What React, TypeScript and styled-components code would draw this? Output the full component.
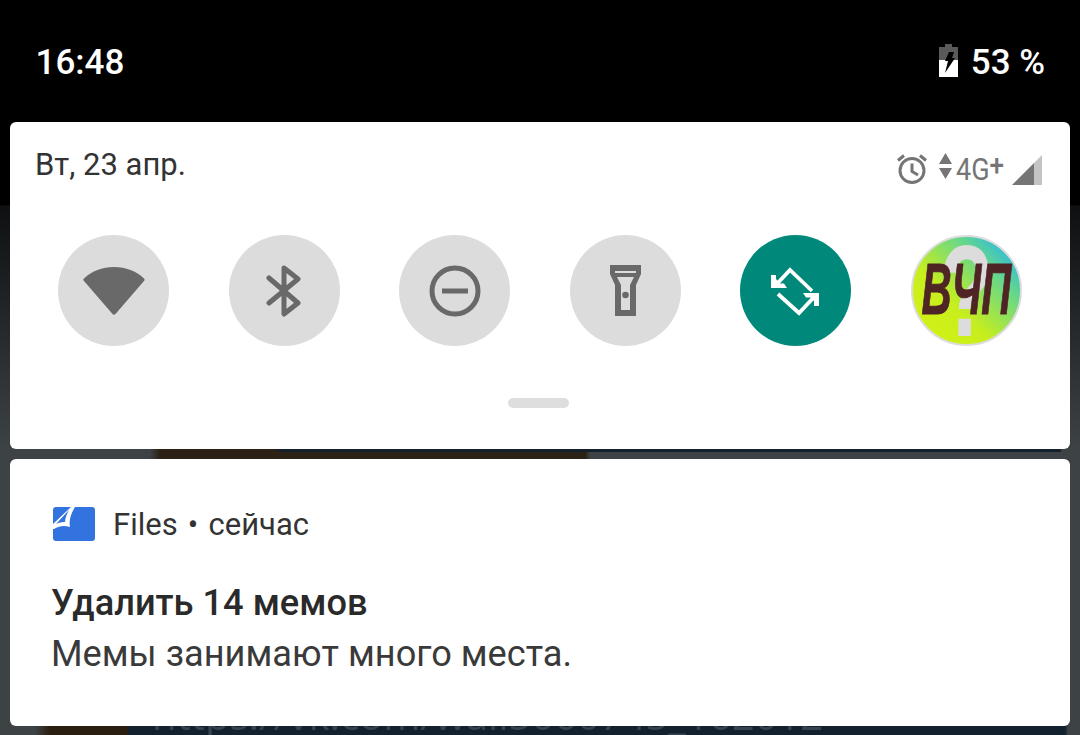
import React from 'react';
import styled, { createGlobalStyle } from 'styled-components';

const GlobalStyle = createGlobalStyle`
  html, body {
    margin: 0;
    padding: 0;
    background: #000;
  }
`;

const Screen = styled.div`
  width: 1080px;
  height: 735px;
  overflow: hidden;
  display: flex;
  flex-direction: column;
  font-family: Roboto, 'Liberation Sans', sans-serif;
  background: linear-gradient(to bottom, #000 0, #000 205px, #0e1011 206px, #3d4245 450px, #3d4245 100%);
`;

const StatusBar = styled.div`
  height: 122px;
  flex: none;
  box-sizing: border-box;
  padding: 2px 35px 0 35.5px;
  display: flex;
  align-items: center;
  justify-content: space-between;
  color: #fff;
  font-size: 35px;
  font-weight: 500;
`;

const Battery = styled.div`
  display: flex;
  align-items: center;
  gap: 13px;

  svg {
    margin-top: -3px;
  }
`;

const Card = styled.section`
  flex: none;
  margin: 0 10px;
  background: #fff;
  border-radius: 6px;
`;

const QuickPanel = styled(Card)`
  height: 327px;
  box-sizing: border-box;
  padding: 28px 28px 0 25px;
  display: flex;
  flex-direction: column;
`;

const PanelHeader = styled.div`
  height: 40px;
  display: flex;
  align-items: flex-start;
  justify-content: space-between;
`;

const DateText = styled.span`
  font-size: 31px;
  line-height: 30px;
  color: #333;
`;

const StatusIcons = styled.div`
  display: flex;
  align-items: center;
  color: #757575;
  margin-top: 2px;
`;

const NetworkLabel = styled.span`
  font-size: 31px;
  line-height: 34px;
  color: #757575;
  transform: scaleX(0.87);
  transform-origin: left center;
  width: 47px;
  margin: 1px 9px 0 0;
  white-space: nowrap;
`;

const Plus = styled.sup`
  font-size: 30px;
  line-height: 0;
  font-weight: 500;
  vertical-align: 5px;
`;

const Tiles = styled.div`
  margin: 45px 0 0 23px;
  display: flex;
  gap: 59.500px;
`;

const Tile = styled.div<{ $active?: boolean }>`
  width: 111px;
  height: 111px;
  flex: none;
  border-radius: 50%;
  display: flex;
  align-items: center;
  justify-content: center;
  background: ${p => (p.$active ? '#00897b' : '#dcdcdc')};
  color: ${p => (p.$active ? '#fff' : '#696969')};
`;

const BadgeTile = styled(Tile)`
  position: relative;
  overflow: hidden;
  box-sizing: border-box;
  border: 2px solid #dcdcdc;
  background: linear-gradient(45deg, #d8f310 0%, #c6ee1e 38%, #63d68e 72%, #27b5e8 92%);
`;

const BadgeMark = styled.span`
  position: absolute;
  inset: 1px 0 0;
  display: flex;
  align-items: center;
  justify-content: center;
  font-family: 'Liberation Sans', sans-serif;
  font-size: 130px;
  line-height: 1;
  font-weight: 700;
  color: #dcdcdc;
  transform: scaleX(0.68);
`;

const BadgeText = styled.span`
  position: relative;
  font-family: 'Liberation Sans', sans-serif;
  font-size: 72px;
  line-height: 72px;
  font-weight: 700;
  font-style: italic;
  color: #4f2424;
  -webkit-text-stroke: 1px #4f2424;
  transform: scaleX(0.58);
  margin-top: -3px;
  white-space: nowrap;
`;

const Handle = styled.div`
  width: 61px;
  height: 10px;
  margin: 52px auto 0;
  border-radius: 5px;
  background: #dedede;
`;

const Gap = styled.div`
  height: 10px;
  flex: none;
  background:
    linear-gradient(to right, transparent 0, transparent 275px, #14202b 280px, #14202b 1060px, transparent 1062px) top / 100% 3px no-repeat,
    linear-gradient(to right, transparent 0, transparent 150px, #2b2114 160px, #2b2114 585px, transparent 590px);
`;

const Notification = styled(Card)`
  height: 267px;
  box-sizing: border-box;
  padding: 46px 42px 0 41px;
  display: flex;
  flex-direction: column;
`;

const AppRow = styled.div`
  display: flex;
  align-items: center;
  gap: 18px;
  height: 38px;
  padding-left: 2px;
  font-size: 31px;
  color: #333;
`;

const Dot = styled.span`
  margin: 0 2.500px;
`;

const Title = styled.div`
  margin-top: 40px;
  font-size: 36.200px;
  line-height: 40px;
  font-weight: 500;
  color: #2a2a2a;
`;

const Body = styled.div`
  margin-top: 11px;
  font-size: 36.200px;
  line-height: 40px;
  color: #3a3a3a;
`;

const BottomPeek = styled.div`
  flex: 1;
  overflow: hidden;
  display: flex;
  background: linear-gradient(to right, transparent 0, transparent 35px, #2a1e10 50px, #2a1e10 127px, #13202d 129px, #13202d 1065px, transparent 1068px);
`;

const PeekText = styled.span`
  margin: -35px 0 0 152px;
  font-family: 'Open Sans', sans-serif;
  font-size: 40px;
  line-height: 48px;
  color: #34434f;
  white-space: nowrap;
`;

const BatteryIcon = () => (
  <svg width="19" height="33" viewBox="0 0 19 33">
    <path d="M6 0h7v3h6v15H0V3h6z" fill="#5a5a5a" />
    <path d="M0 16h19v17H0z" fill="#fff" />
    <path d="M10 8h5l-2 6h3L6 29l3-12H6z" fill="#000" />
  </svg>
);

const AlarmIcon = () => (
  <svg width="30" height="32" viewBox="0 0 30 32" fill="none" stroke="currentColor">
    <circle cx="15" cy="16.500" r="12" strokeWidth="3" />
    <path d="M15 9.500v8l6 3.500M1 6.500l6-5M29 6.500l-6-5" strokeWidth="3" />
  </svg>
);

const DataArrows = () => (
  <svg width="13" height="26" viewBox="0 0 13 26" fill="currentColor" style={{ margin: '-8px 4px 0 12px' }}>
    <path d="M6.500 0 13 11H0zM0 15h13L6.500 26z" />
  </svg>
);

const SignalIcon = () => (
  <svg width="30" height="30" viewBox="0 0 30 30">
    <path d="M0 30 22 8v22z" fill="#757575" />
    <path d="M22 8 30 0v30h-8z" fill="#c4c4c4" />
  </svg>
);

const WifiIcon = () => (
  <svg width="64" height="50" viewBox="0 0 64 50" fill="currentColor">
    <path d="M2 12.500C10 5 20 1 32 1s22 4 30 11.500c.800.800.800 1.500.200 2.200L33.500 48c-.800 1-2.200 1-3 0L1.800 14.700c-.600-.700-.600-1.400.200-2.200z" />
  </svg>
);

const BluetoothIcon = () => (
  <svg width="36" height="52" viewBox="0 0 36 52" fill="none" stroke="currentColor" strokeWidth="5" strokeLinecap="round" strokeLinejoin="round">
    <path d="M3 13 32 38 18 49V3l14 11L3 38" />
  </svg>
);

const DndIcon = () => (
  <svg width="52" height="52" viewBox="0 0 52 52" fill="none" stroke="currentColor" strokeWidth="5">
    <circle cx="26" cy="26" r="23" />
    <path d="M13 26h26" />
  </svg>
);

const TorchIcon = () => (
  <svg width="31" height="51" viewBox="0 0 31 51" fill="currentColor">
    <path fillRule="evenodd" d="M0 0h31v9l-5 11v31H5V20L0 9zM5 6v2h21V6zM11 20v25h9V20l4-8H7z" />
    <circle cx="15.500" cy="30" r="3.300" />
  </svg>
);

const RotateIcon = () => (
  <svg width="52" height="50" viewBox="0 0 52 50">
    <path d="M5 20 20 4l22 21M8 28l21 19 17-18" fill="none" stroke="currentColor" strokeWidth="3.800" />
    <path d="M1 9h5v4l4.500 4.500H14l3 4.500H1zM49 40h-5v-5l-4-3.500h-4l-3-4.500h16z" fill="currentColor" />
  </svg>
);

const FilesIcon = () => (
  <svg width="42" height="34" viewBox="0 0 42 34">
    <rect width="42" height="34" rx="3" fill="#3273e0" />
    <path
      fillRule="evenodd"
      fill="#fff"
      d="M0 17 18 0h4c-5 8-6 14-5 20-6-2-11-1-16 2H0zM3 17c3-1.500 6-2 9-2 0-4 2-8 4-12z"
    />
  </svg>
);

export default function App() {
  return (
    <Screen>
      <GlobalStyle />
      <StatusBar>
        <span>16:48</span>
        <Battery>
          <BatteryIcon />
          <span>53 %</span>
        </Battery>
      </StatusBar>
      <QuickPanel>
        <PanelHeader>
          <DateText>Вт, 23 апр.</DateText>
          <StatusIcons>
            <AlarmIcon />
            <DataArrows />
            <NetworkLabel>4G<Plus>+</Plus></NetworkLabel>
            <SignalIcon />
          </StatusIcons>
        </PanelHeader>
        <Tiles>
          <Tile><WifiIcon /></Tile>
          <Tile><BluetoothIcon /></Tile>
          <Tile><DndIcon /></Tile>
          <Tile><TorchIcon /></Tile>
          <Tile $active><RotateIcon /></Tile>
          <BadgeTile>
            <BadgeMark>?</BadgeMark>
            <BadgeText>ВЧП</BadgeText>
          </BadgeTile>
        </Tiles>
        <Handle />
      </QuickPanel>
      <Gap />
      <Notification>
        <AppRow>
          <FilesIcon />
          <span>Files <Dot>•</Dot> сейчас</span>
        </AppRow>
        <Title>Удалить 14 мемов</Title>
        <Body>Мемы занимают много места.</Body>
      </Notification>
      <BottomPeek>
        <PeekText>https://vk.com/wall5060745_162012</PeekText>
      </BottomPeek>
    </Screen>
  );
}
